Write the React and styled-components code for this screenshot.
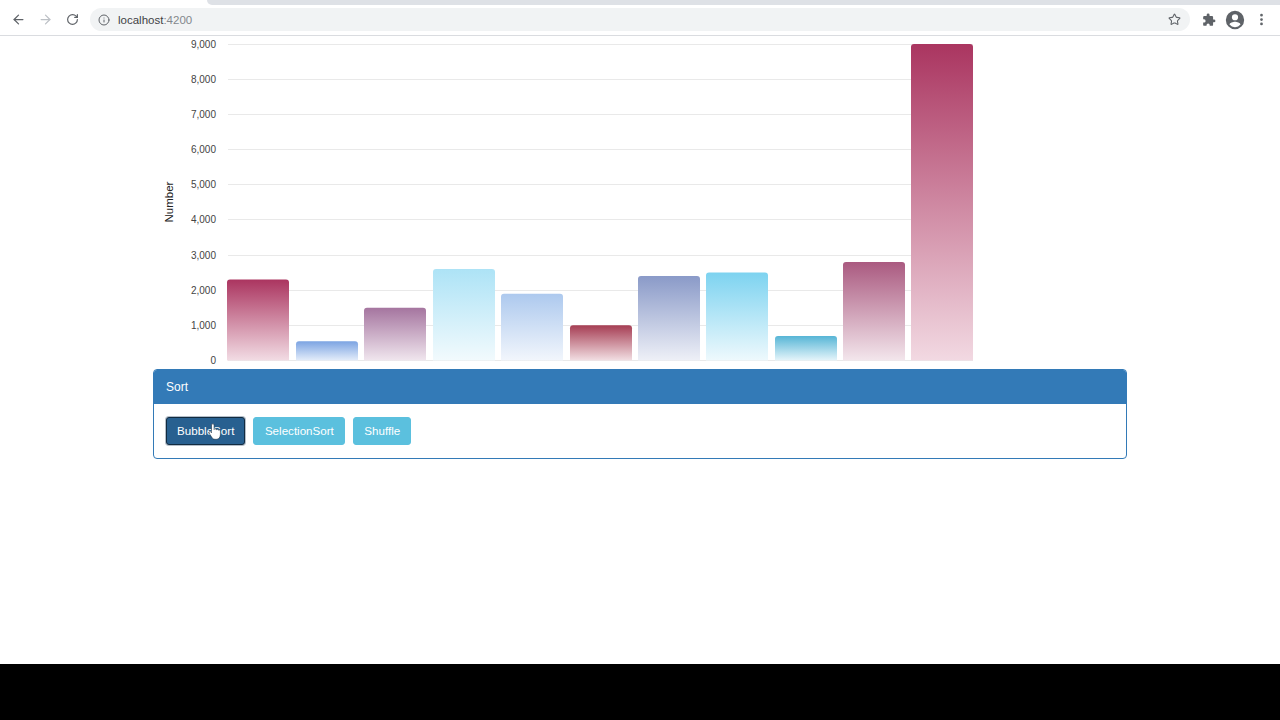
import styled, { createGlobalStyle } from 'styled-components';
import { ArrowLeft, ArrowRight, RotateCw, Info, Star, MoreVertical } from 'lucide-react';

const GlobalStyle = createGlobalStyle`
  html, body {
    margin: 0;
    padding: 0;
    background: #fff;
    overflow: hidden;
  }
  body {
    font-family: "Liberation Sans", Arial, sans-serif;
  }
`;

const Page = styled.div`
  width: 1280px;
  height: 720px;
  display: flex;
  flex-direction: column;
`;

const TabStrip = styled.div`
  height: 5px;
  flex: none;
  display: flex;
  background: #fff;
`;

const ActiveTab = styled.div`
  width: 207px;
  background: #fff;
`;

const InactiveTabs = styled.div`
  flex: 1;
  background: #dee1e6;
  border-bottom-left-radius: 6px;
`;

const Toolbar = styled.div`
  height: 31px;
  flex: none;
  box-sizing: border-box;
  display: flex;
  align-items: center;
  padding: 0 11.5px 1px 8px;
  background: #fff;
  border-bottom: 1px solid #dadce0;
`;

const NavButton = styled.div`
  width: 20px;
  height: 20px;
  margin-right: ${(p) => p.$gap || 7}px;
  display: flex;
  align-items: center;
  justify-content: center;
  color: ${(p) => (p.$disabled ? '#bdc1c6' : '#5f6368')};
`;

const AddressBar = styled.div`
  width: 1100px;
  height: 23px;
  box-sizing: border-box;
  display: flex;
  align-items: center;
  padding: 0 9px 0 8px;
  background: #f1f3f4;
  border-radius: 12px;
  color: #5f6368;
`;

const Url = styled.span`
  margin-left: 8px;
  font-size: 11.5px;
  color: #202124;
  opacity: 0.85;
`;

const Port = styled.span`
  color: #70757a;
`;

const Spacer = styled.div`
  flex: 1;
`;

const ToolIcons = styled.div`
  flex: 1;
  display: flex;
  align-items: center;
  justify-content: flex-end;
  gap: 8px;
  color: #5f6368;
`;

const Content = styled.main`
  flex: 1;
  min-height: 0;
  padding-left: 153px;
  display: flex;
  flex-direction: column;
  background: #fff;
`;

const ChartFrame = styled.div`
  height: 333px;
  flex: none;
`;

const AxisText = styled.text`
  font-family: "Liberation Sans", Arial, sans-serif;
  font-size: 10px;
  fill: #444;
`;

const AxisTitle = styled(AxisText)`
  font-size: 11.5px;
  fill: #222;
`;

const Panel = styled.section`
  width: 974px;
  box-sizing: border-box;
  border: 1px solid #337ab7;
  border-radius: 4px;
  overflow: hidden;
  background: #fff;
`;

const PanelHeading = styled.div`
  height: 34px;
  box-sizing: border-box;
  padding: 0 12px;
  display: flex;
  align-items: center;
  background: #337ab7;
  color: #fff;
  font-size: 12px;
`;

const PanelBody = styled.div`
  height: 54px;
  box-sizing: border-box;
  padding: 13px 12px;
  display: flex;
  align-items: flex-start;
  gap: 8px;
`;

const Button = styled.button`
  position: relative;
  height: 28px;
  box-sizing: border-box;
  padding: 0 ${(p) => p.$pad || 10}px 2px;
  font-family: inherit;
  font-size: 11.6px;
  color: #fff;
  border-radius: 3px;
  background: ${(p) => (p.$active ? '#286090' : '#5bc0de')};
  border: 1px solid ${(p) => (p.$active ? '#122b40' : '#5bc0de')};
  box-shadow: ${(p) => (p.$active ? '0 0 0 1px rgba(40, 70, 100, 0.35)' : 'none')};
`;

const Cursor = styled.svg`
  position: absolute;
  left: 41px;
  top: 5px;
`;

const BlackBar = styled.div`
  height: 56px;
  flex: none;
  background: #000;
`;

const bars = [
  { value: 2300, x: 227, top: '#ab3560', bottom: '#f2dce4' },
  { value: 550, x: 296, top: '#7ba3e2', bottom: '#e4edfa' },
  { value: 1500, x: 364, top: '#a5759f', bottom: '#f0e6ee' },
  { value: 2600, x: 433, top: '#ade3f6', bottom: '#f2fafd' },
  { value: 1900, x: 501, top: '#adc9ee', bottom: '#f2f6fc' },
  { value: 1000, x: 570, top: '#a63e54', bottom: '#f2dfe3' },
  { value: 2400, x: 638, top: '#8a9ac8', bottom: '#eef0f7' },
  { value: 2500, x: 706, top: '#7dd3f0', bottom: '#eef9fd' },
  { value: 700, x: 775, top: '#56b5d6', bottom: '#e6f5fa' },
  { value: 2800, x: 843, top: '#aa5a80', bottom: '#f3e6ec' },
  { value: 9000, x: 911, top: '#aa3560', bottom: '#f2d9e2' },
];

const ticks = [0, 1000, 2000, 3000, 4000, 5000, 6000, 7000, 8000, 9000];

// svg origin sits at x=153, y=36 of the page
const OFFSET_X = 153;
const OFFSET_Y = 36;
const ZERO = 360.5 - OFFSET_Y;
const PER_UNIT = 316.5 / 9000;

function barPath(x, y, w, h) {
  const r = Math.min(3, h);
  return `M${x} ${y + h}V${y + r}Q${x} ${y} ${x + r} ${y}H${x + w - r}Q${x + w} ${y} ${x + w} ${y + r}V${y + h}Z`;
}

function Chart() {
  return (
    <svg width="840" height="333" viewBox="0 0 840 333">
      <defs>
        {bars.map((bar, i) => (
          <linearGradient key={i} id={`bar${i}`} x1="0" y1="0" x2="0" y2="1">
            <stop offset="0" stopColor={bar.top} />
            <stop offset="1" stopColor={bar.bottom} />
          </linearGradient>
        ))}
      </defs>
      {ticks.map((tick) => {
        const y = ZERO - tick * PER_UNIT;
        const lineY = Math.floor(y) + 0.5;
        return (
          <g key={tick}>
            <line x1="75" x2="820" y1={lineY} y2={lineY} stroke="#e9e9e9" strokeWidth="1" />
            <AxisText x="63" y={y + 3.5} textAnchor="end">
              {tick.toLocaleString('en-US')}
            </AxisText>
          </g>
        );
      })}
      <AxisTitle x="0" y="0" textAnchor="middle" transform="translate(20 166) rotate(-90)">
        Number
      </AxisTitle>
      {bars.map((bar, i) => {
        const h = bar.value * PER_UNIT;
        return <path key={i} d={barPath(bar.x - OFFSET_X, ZERO - h, 62, h)} fill={`url(#bar${i})`} />;
      })}
    </svg>
  );
}

function PuzzleIcon() {
  return (
    <svg width="14" height="14" viewBox="0 0 24 24" fill="currentColor">
      <path d="M20.5 11H19V7a2 2 0 0 0-2-2h-4V3.500a2.500 2.500 0 0 0-5 0V5H4a2 2 0 0 0-2 2v3.800h1.500a2.700 2.700 0 0 1 0 5.400H2V20a2 2 0 0 0 2 2h3.800v-1.500a2.700 2.700 0 0 1 5.400 0V22H17a2 2 0 0 0 2-2v-4h1.500a2.500 2.500 0 0 0 0-5z" />
    </svg>
  );
}

function AccountIcon() {
  return (
    <svg width="22" height="22" viewBox="0 0 24 24" fill="currentColor">
      <path d="M12 2a10 10 0 1 0 0 20 10 10 0 0 0 0-20zm0 3.600a3.400 3.400 0 1 1 0 6.800 3.400 3.400 0 0 1 0-6.800zm0 14.200a7.600 7.600 0 0 1-6-2.900c.03-2 4-3.100 6-3.100s5.970 1.100 6 3.100a7.600 7.600 0 0 1-6 2.900z" />
    </svg>
  );
}

export default function App() {
  return (
    <Page>
      <GlobalStyle />
      <TabStrip>
        <ActiveTab />
        <InactiveTabs />
      </TabStrip>
      <Toolbar>
        <NavButton $gap={7}>
          <ArrowLeft size={15} strokeWidth={2} />
        </NavButton>
        <NavButton $gap={7} $disabled>
          <ArrowRight size={15} strokeWidth={2} />
        </NavButton>
        <NavButton $gap={8}>
          <RotateCw size={13} strokeWidth={2.2} />
        </NavButton>
        <AddressBar>
          <Info size={12} strokeWidth={2} />
          <Url>
            localhost<Port>:4200</Port>
          </Url>
          <Spacer />
          <Star size={13} strokeWidth={2} />
        </AddressBar>
        <ToolIcons>
          <PuzzleIcon />
          <AccountIcon />
          <MoreVertical size={15} strokeWidth={2.4} />
        </ToolIcons>
      </Toolbar>
      <Content>
        <ChartFrame>
          <Chart />
        </ChartFrame>
        <Panel>
          <PanelHeading>Sort</PanelHeading>
          <PanelBody>
            <Button $active>
              BubbleSort
              <Cursor width="14" height="17" viewBox="0 0 14 17">
                <path
                  d="M3.500 2c0-1.600 2.600-1.600 2.600 0v4.500c.4-1 2.200-.9 2.300.3.400-.9 2-.7 2.100.4.500-.6 1.900-.4 1.900.8v3.500c0 2.600-1.500 4.800-3.900 4.800H7c-1.700 0-2.600-.8-3.400-2.200L1.200 10.200c-.7-1.300.9-2.300 1.800-1.100l.5.700z"
                  fill="#fff"
                  stroke="#1d2f40"
                  strokeWidth="0.6"
                />
              </Cursor>
            </Button>
            <Button $pad={10.5}>SelectionSort</Button>
            <Button>Shuffle</Button>
          </PanelBody>
        </Panel>
      </Content>
      <BlackBar />
    </Page>
  );
}
